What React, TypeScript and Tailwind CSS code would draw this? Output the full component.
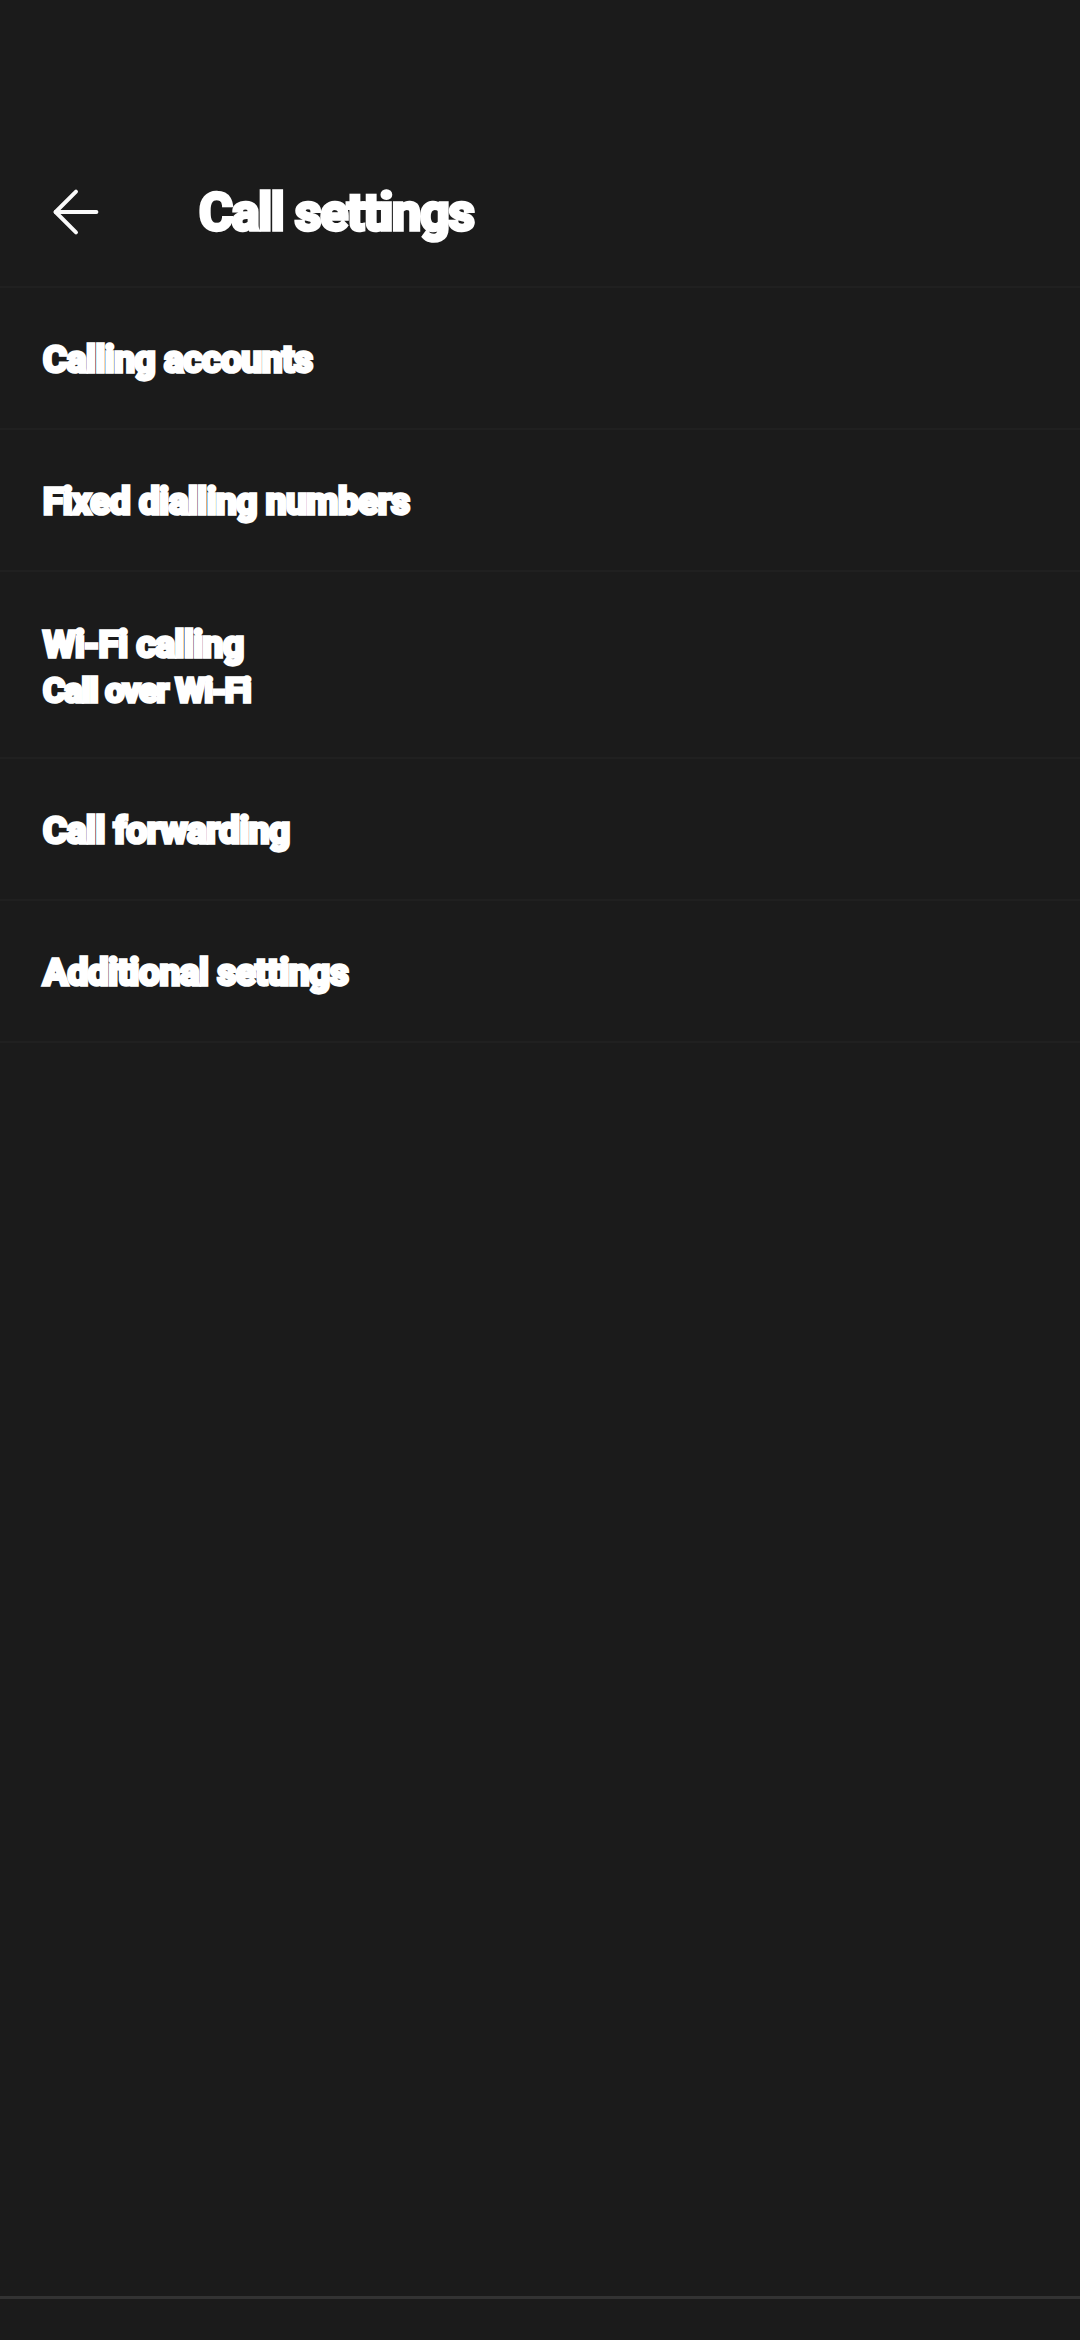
import { ArrowLeft } from "lucide-react";

const rows = [
  { title: "Calling accounts" },
  { title: "Fixed dialling numbers" },
  { title: "Wi-Fi calling", summary: "Call over Wi-Fi" },
  { title: "Call forwarding" },
  { title: "Additional settings" },
];

const App = () => {
  return (
    <div className="min-h-[2340px] w-full bg-[#1b1b1b] flex flex-col font-['Roboto',sans-serif] text-white">
      {/* status bar space */}
      <div className="h-[138px]" />

      <header className="h-[150px] flex items-center border-b-2 border-[#202020]">
        <button className="w-[199px] h-full flex items-center pl-[41px] shrink-0">
          <ArrowLeft size={70} strokeWidth={1.35} color="#fafafa" />
        </button>
        <h1 className="text-[52px] font-bold tracking-tight [-webkit-text-stroke:3.5px_white] pt-[2px]">
          Call settings
        </h1>
      </header>

      <ul>
        {rows.map((row) => (
          <li
            key={row.title}
            className={`flex flex-col justify-center px-[43px] border-b-2 border-[#202020] ${
              row.summary ? "h-[187px]" : "h-[142px]"
            }`}
          >
            <span className="text-[37px] leading-[46px] font-bold tracking-[-0.012em] [-webkit-text-stroke:3.5px_white] pt-[4px]">
              {row.title}
            </span>
            {row.summary && (
              <span className="text-[34px] leading-[44px] font-bold tracking-[-0.028em] [-webkit-text-stroke:3.5px_white]">
                {row.summary}
              </span>
            )}
          </li>
        ))}
      </ul>

      <div className="flex-1" />
      <div className="h-[3px] bg-[#333333] mb-[41px]" />
    </div>
  );
};

export default App;
